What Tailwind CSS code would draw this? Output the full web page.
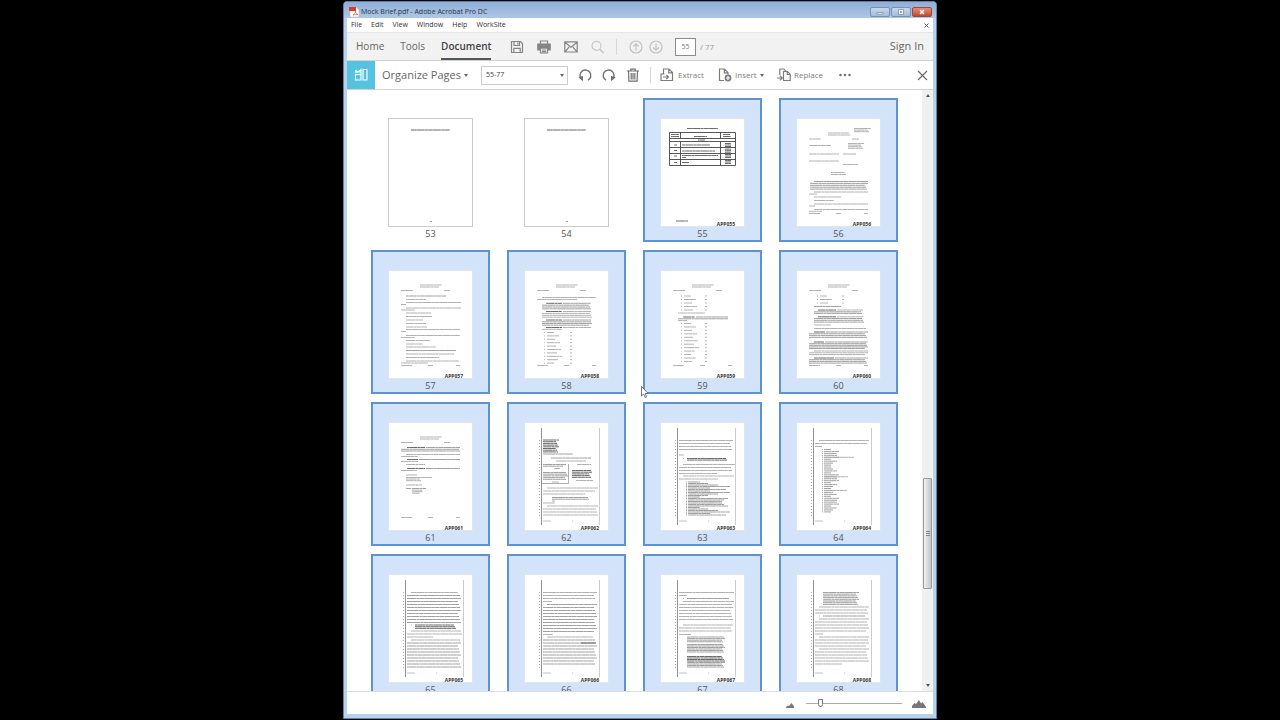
<!doctype html>
<html lang="en">

<head>
  <meta charset="UTF-8">
  <meta name="viewport" content="width=device-width, initial-scale=1.0">
  <title>Mock Brief.pdf - Adobe Acrobat Pro DC</title>
  <script src="https://cdn.jsdelivr.net/npm/@tailwindcss/browser@4"></script>
</head>

<body class="bg-black font-['Open_Sans','Noto_Sans',sans-serif] text-[#666]">
  <div class="relative mx-auto flex h-screen w-full max-w-[594px] flex-col pt-px pb-px">
    <div class="flex min-h-0 flex-1 flex-col rounded-t-sm border border-[#5b83ab] bg-[#b8d2ec] px-[3px] pb-1">

      <!-- title bar -->
      <header class="-mx-[3px] flex h-4 shrink-0 items-center rounded-t-sm bg-linear-to-b from-[#8fafd6] to-[#adc7e6] pr-1 pl-1">
        <svg class="mt-1 size-3" viewBox="0 0 12 12" aria-hidden="true">
          <path d="M2 1h6l3 3v7H2z" fill="#fff" stroke="#c9b5b5" stroke-width=".6" />
          <path d="M1 1h7v4H1z" fill="#d63a2c" />
          <path d="M5 9c1.500-1 2.500-2 2.500-4 0 2 .8 2.500 2.500 3.500-2 0-3.500 0-5 .5z" fill="none" stroke="#d63a2c" stroke-width=".6" />
        </svg>
        <h1 class="mt-1 ml-px flex-1 text-[7px] leading-3 text-[#27364a]">Mock Brief.pdf - Adobe Acrobat Pro DC</h1>
        <div class="mt-1 flex gap-px">
          <button aria-label="Minimize" class="flex h-[10px] w-5 items-center justify-center rounded-[2px] border border-[#7891b3] bg-linear-to-b from-[#c7d8ec] to-[#a3bddb]">
            <svg class="h-2 w-3" viewBox="0 0 12 8"><path d="M3 4.5h6v1.5H3z" fill="#fff" stroke="#6c7f99" stroke-width=".6" /></svg>
          </button>
          <button aria-label="Maximize" class="flex h-[10px] w-5 items-center justify-center rounded-[2px] border border-[#7891b3] bg-linear-to-b from-[#c7d8ec] to-[#a3bddb]">
            <svg class="h-2 w-3" viewBox="0 0 12 8"><path d="M3.5 1.5h5v5h-5z" fill="#fff" stroke="#6c7f99" stroke-width=".7" /><path d="M5 3.3h2v1.4H5z" fill="#6c7f99" /></svg>
          </button>
          <button aria-label="Close" class="flex h-[10px] w-5 items-center justify-center rounded-[2px] border border-[#9b4a3c] bg-linear-to-b from-[#e0907c] to-[#c8452a]">
            <svg class="h-2 w-3" viewBox="0 0 12 8"><path d="M4 2l4 4M8 2L4 6" stroke="#fff" stroke-width="1.4" /></svg>
          </button>
        </div>
      </header>

      <!-- menu bar -->
      <nav class="flex h-[14px] shrink-0 items-center gap-[9px] bg-white px-1 text-[7px] text-[#333]">
        <button>File</button>
        <button>Edit</button>
        <button>View</button>
        <button>Window</button>
        <button>Help</button>
        <button>WorkSite</button>
        <button aria-label="Close document" class="ml-auto">
          <svg class="size-[5px]" viewBox="0 0 5 5"><path d="M.5.5l4 4M4.5.5l-4 4" stroke="#666" stroke-width="1" /></svg>
        </button>
      </nav>

      <!-- main toolbar -->
      <div class="flex h-[29px] shrink-0 items-center border-y border-t-[#e6e6e6] border-b-[#d2d2d2] bg-[#f2f2f2] pr-[9px] pl-[9px] text-[10px]">
        <nav class="flex h-full w-[154px] items-center gap-4">
          <a href="#home">Home</a>
          <a href="#tools">Tools</a>
          <a href="#document" class="flex h-full items-center border-y-2 border-t-transparent border-b-[#555] font-semibold text-[#444]">Document</a>
        </nav>
        <div class="flex items-center gap-[13px] text-[#858585]">
          <button aria-label="Save">
            <svg class="size-[14px]" viewBox="0 0 14 14" fill="none" stroke="currentColor" stroke-width="1.2"><path d="M1.500 1.500h9l2 2v9h-11zM4 1.500v4h5.500v-4M3.800 12.500v-4.200h6.400v4.200M7.800 2.500v2" /></svg>
          </button>
          <button aria-label="Print">
            <svg class="size-[14px]" viewBox="0 0 14 14" fill="none" stroke="currentColor" stroke-width="1.2"><path d="M3.500 4V1h7v3" /><path d="M.8 4h12.400v6H11V8H3v2H.8z" fill="currentColor" /><path d="M3.500 8v5h7V8zM5 10h4M5 11.600h4" /></svg>
          </button>
          <button aria-label="Email">
            <svg class="size-[14px]" viewBox="0 0 14 14" fill="none" stroke="currentColor" stroke-width="1.2"><path d="M.8 1.800h12.400v10.200H.8zM1 2.300l6 5 6-5M1 11.800l4.200-5M13 11.800L8.800 6.800" /></svg>
          </button>
          <button aria-label="Search" class="text-[#c8c8c8]">
            <svg class="size-[14px]" viewBox="0 0 14 14" fill="none" stroke="currentColor" stroke-width="1.200"><circle cx="5.500" cy="5.800" r="4.500" /><path d="M8.800 9.300l3.800 3.800" stroke-width="1.600" /></svg>
          </button>
        </div>
        <span class="ml-[11px] h-4 w-px bg-[#d6d6d6]"></span>
        <div class="ml-3 flex gap-[6px] text-[#c2c2c2]">
          <button aria-label="Previous page">
            <svg class="size-[14px]" viewBox="0 0 14 14" fill="none" stroke="currentColor" stroke-width="1.200"><circle cx="7" cy="7" r="6" /><path d="M7 10.500V4M4.300 6.500L7 3.800l2.700 2.700" /></svg>
          </button>
          <button aria-label="Next page">
            <svg class="size-[14px]" viewBox="0 0 14 14" fill="none" stroke="currentColor" stroke-width="1.200"><circle cx="7" cy="7" r="6" /><path d="M7 3.500V10M4.300 7.500L7 10.200l2.700-2.700" /></svg>
          </button>
        </div>
        <input aria-label="Page number" value="55" class="ml-3 h-[18px] w-[21px] border border-[#8c8c8c] bg-white text-center text-[7px] text-[#777]">
        <span class="ml-1 text-[8px] text-[#999]">/ 77</span>
        <button class="ml-auto text-[11px]">Sign In</button>
      </div>

      <!-- organize pages toolbar -->
      <div class="flex h-[29px] shrink-0 items-center border-b border-[#d2d2d2] bg-white pr-[5px] text-[8px] text-[#7c7c7c]">
        <div class="flex h-full w-7 items-center justify-center bg-[#55c3e0]">
          <svg class="size-[14px]" viewBox="0 0 14 14" fill="none" stroke="#fff" stroke-width="1.100"><path d="M1.500 6.500h5.500v5.500H1.500zM9 1.500h4v10.500H9z" /><path d="M1.500 4.500V2M7 6.500V1.500L4 4h3" /><path d="M1 5l1-3.500 2.500 2.500z" fill="#fff" stroke="none" /></svg>
        </div>
        <button class="ml-[7px] flex w-[99px] items-center gap-[3px] text-[11px] text-[#666]">Organize Pages
          <svg class="h-[3px] w-1" viewBox="0 0 4 3"><path d="M0 0h4L2 3z" fill="#666" /></svg>
        </button>
        <div class="relative">
          <select aria-label="Page range" class="h-[19px] w-[87px] appearance-none border border-[#ccc] bg-white pl-1 text-[7px] text-[#444]">
            <option>55-77</option>
          </select>
          <svg class="pointer-events-none absolute top-2 right-1 h-[3px] w-1" viewBox="0 0 4 3"><path d="M0 0h4L2 3z" fill="#666" /></svg>
        </div>
        <div class="ml-[10px] flex items-center gap-[10px] text-[#707070]">
          <button aria-label="Rotate counterclockwise">
            <svg class="size-[14px]" viewBox="0 0 14 14" fill="none" stroke="currentColor" stroke-width="1.400"><path d="M10 12.200A5.400 5.400 0 1 0 3.600 11.300" /><path d="M.3 9.200l4.700-1.200v5.200z" fill="currentColor" stroke="none" /></svg>
          </button>
          <button aria-label="Rotate clockwise">
            <svg class="size-[14px]" viewBox="0 0 14 14" fill="none" stroke="currentColor" stroke-width="1.400"><path d="M4 12.200A5.400 5.400 0 1 1 10.400 11.300" /><path d="M13.700 9.200L9 8v5.200z" fill="currentColor" stroke="none" /></svg>
          </button>
          <button aria-label="Delete pages">
            <svg class="size-[14px]" viewBox="0 0 14 14" fill="none" stroke="currentColor" stroke-width="1.200"><path d="M1 3h12M4.800 3V1.200h4.400V3M2.500 3l.4 10.200h8.200L11.500 3M5.200 5v6.500M7 5v6.500M8.800 5v6.500" /></svg>
          </button>
        </div>
        <span class="ml-[10px] h-4 w-px bg-[#d6d6d6]"></span>
        <button class="ml-[9px] flex w-[58px] items-center gap-1">
          <svg class="size-[14px] shrink-0" viewBox="0 0 14 14" fill="none" stroke="currentColor" stroke-width="1.200"><path d="M3.500 6V1h5.500l3.500 3.500v8h-8M8.800 1v3.800h3.700" /><path d="M4.500 6H1v6.500h4M3 9h5M6.300 7L8.500 9l-2.200 2" /></svg>
          Extract
        </button>
        <button class="flex w-[59px] items-center gap-[3px]">
          <svg class="size-[14px] shrink-0" viewBox="0 0 14 14" fill="none" stroke="currentColor" stroke-width="1.200"><path d="M6 12.500H1.500V1h5L10 4.500v2.300M6.300 1v3.800H10" /><circle cx="10" cy="10" r="3.400" fill="currentColor" stroke="none" /><path d="M10 8v4M8 10h4" stroke="#fff" /></svg>
          Insert
          <svg class="h-[3px] w-1" viewBox="0 0 4 3"><path d="M0 0h4L2 3z" fill="#666" /></svg>
        </button>
        <button class="flex w-[61px] items-center gap-[3px]">
          <svg class="size-[14px] shrink-0" viewBox="0 0 14 14" fill="none" stroke="currentColor" stroke-width="1.200"><path d="M6.500 12.500V3.500h4l2.700 2.700v6.300zM10.300 3.500v3h2.900M2.800 7V1h4L9 3.200" /><path d="M0 10h5M3 7.800L5.300 10 3 12.200" /></svg>
          Replace
        </button>
        <button aria-label="More">
          <svg class="h-1 w-[14px]" viewBox="0 0 14 4" fill="#757575"><circle cx="2.500" cy="2" r="1.300" /><circle cx="7" cy="2" r="1.300" /><circle cx="11.500" cy="2" r="1.300" /></svg>
        </button>
        <button aria-label="Close toolbar" class="ml-auto">
          <svg class="size-[11px]" viewBox="0 0 11 11"><path d="M1 1l9 9M10 1l-9 9" stroke="#666" stroke-width="1.100" /></svg>
        </button>
      </div>

      <!-- thumbnails -->
      <div class="flex min-h-0 flex-1 bg-white">
        <main id="pages" class="grid min-w-0 flex-1 grid-cols-4 content-start gap-x-[17px] gap-y-2 overflow-hidden px-6 pt-2"></main>
        <div class="flex w-[11px] shrink-0 flex-col items-center bg-[#f0f0f0]" role="scrollbar" aria-controls="pages" aria-label="Pages" aria-valuenow="73">
          <svg class="mt-1 h-[3px] w-1 shrink-0" viewBox="0 0 4 3"><path d="M0 3h4L2 0z" fill="#555" /></svg>
          <span class="grow-[381] basis-0"></span>
          <span class="flex w-[9px] grow-[109] basis-0 flex-col items-center justify-center gap-px rounded-[1px] border border-[#999] bg-linear-to-r from-[#f2f2f2] to-[#c4c4c8]">
            <i class="h-px w-1 bg-[#888]"></i>
            <i class="h-px w-1 bg-[#888]"></i>
            <i class="h-px w-1 bg-[#888]"></i>
          </span>
          <span class="grow-[95] basis-0"></span>
          <svg class="mb-1 h-[3px] w-1 shrink-0" viewBox="0 0 4 3"><path d="M0 0h4L2 3z" fill="#555" /></svg>
        </div>
      </div>

      <!-- zoom bar -->
      <footer class="flex h-[23px] shrink-0 items-center justify-end border-t border-[#ddd] bg-white pr-[7px]">
        <svg class="mt-1 h-[5px] w-2" viewBox="0 0 8 5"><path d="M0 5V4L2 2.500l1 .5L5.500 0 8 3.500V5z" fill="#777" /></svg>
        <input type="range" aria-label="Thumbnail size" min="0" max="100" value="13" class="mr-[10px] ml-3 h-3 w-[96px] appearance-none bg-[linear-gradient(#aaa,#aaa)] bg-[length:100%_1px] bg-center bg-no-repeat [&::-webkit-slider-thumb]:h-2 [&::-webkit-slider-thumb]:w-[5px] [&::-webkit-slider-thumb]:appearance-none [&::-webkit-slider-thumb]:rounded-b-[3px] [&::-webkit-slider-thumb]:border [&::-webkit-slider-thumb]:border-[#777] [&::-webkit-slider-thumb]:bg-white">
        <svg class="mt-px h-2 w-[14px]" viewBox="0 0 14 8"><path d="M0 8V6l2.500-3 1.500 1L7 0l2 3.500 1.500-1.500L14 7v1z" fill="#777" /></svg>
      </footer>
    </div>

    <!-- mouse pointer -->
    <svg class="pointer-events-none absolute top-[386px] left-[298px] h-3 w-2" viewBox="0 0 8 12"><path d="M.5.500v9.500l2.200-2 1.500 3.500 1.500-.7-1.500-3.300h3z" fill="#fff" stroke="#555" stroke-width=".8" /></svg>
  </div>

  <script>
    // every row: x, y, width, line count, line step, tone (0 light, 1 medium, 2 dark)
    var tones = ['#a8a8a8', '#959595', '#5a5a5a'];
    var head = [[31, 14, 22, 2, 2, 0], [12, 19.5, 12], [55, 19.5, 6]];
    var foot = [[12, 94.5, 11], [39, 94.5, 5], [67, 94.5, 4]];

    function list(y, n, step, x, col) {
      var rows = [];
      for (var i = 0; i < n; i++) {
        rows.push([x, y + i * step, 1], [x + 3, y + i * step, 7 + (i * 5) % 9], [col, y + i * step, 2]);
      }
      return rows;
    }

    // numbered list packed tight, as in the pleading pages
    function dense(y, n, step, min, spread, tone) {
      var rows = [];
      for (var i = 0; i < n; i++) {
        rows.push([25, y + i * step, 1, 1, 0, 1], [27, y + i * step, min + (i * 7 + i * i) % spread, 1, 0, tone]);
      }
      return rows;
    }

    var pages = [
      { n: 53, rows: [[22, 11, 39, 1, 0, 2], [41, 102.5, 2, 1, 0, 1]] },
      { n: 54, rows: [[22, 11, 39, 1, 0, 2], [41, 102.5, 2, 1, 0, 1]] },
      { n: 55, table: true, rows: [
        [26, 9.5, 31, 1, 0, 2], [10, 15.5, 8, 2, 2, 2], [33, 17.5, 13, 1, 0, 2], [62, 15.5, 10, 2, 2, 2], [37, 21, 7, 1, 0, 2],
        [13, 26, 3, 1, 0, 2], [13, 31.5, 3, 1, 0, 2], [13, 37, 3, 1, 0, 2], [13, 43.5, 3, 1, 0, 2],
        [21, 26, 28, 1, 0, 2], [21, 32, 33, 1, 0, 2], [21, 36.5, 36, 1, 0, 2], [21, 38.5, 4, 1, 0, 2], [21, 43.5, 7, 1, 0, 2],
        [64, 24.5, 6, 3, 1.5, 2], [64, 30.2, 6, 3, 1.5, 2], [64, 35.5, 6, 3, 1.5, 2], [64, 41.5, 6, 3, 1.5, 2], [15, 102, 12, 1, 0, 2]] },
      { n: 56, rows: [[57, 9.5, 17, 3, 1.6], [31, 14, 22, 2, 2], [12, 20, 12], [55, 20, 7], [51, 24.5, 16, 4, 1.6], [12, 26.5, 22], [12, 35, 30],
        [46, 35, 13], [12, 42, 30], [46, 45.5, 15], [34, 53.5, 16, 2, 2], [17, 62.5, 54, 1, 0, 1], [13, 64.4, 58, 4, 1.9, 1], [17, 73, 54], [12, 75, 8], [17, 78, 27],
        [17, 81.5, 20], [17, 85, 54], [12, 87, 6], [17, 90.5, 54], [12, 92.3, 13]].concat(foot) },
      { n: 57, rows: head.concat([[17, 25, 40, 1, 0, 1], [17, 28.5, 20], [17, 31.5, 55], [12, 33.5, 5], [17, 37, 55], [12, 39, 14], [17, 42, 25], [17, 45.5, 26],
        [17, 49, 17], [17, 52.5, 20], [17, 56, 21], [17, 58.5, 54], [12, 60.5, 5], [17, 64.5, 54], [12, 66.5, 14], [17, 69.5, 24], [17, 73, 17], [17, 76, 30],
        [17, 79.5, 50, 1, 0, 1], [17, 83, 48], [17, 86.5, 33], [17, 90, 53], [12, 92, 27]], foot) },
      { n: 58, rows: head.concat([[17, 26.5, 54], [12, 28.5, 40], [21, 32.3, 16, 1, 0, 2], [38, 32.3, 28, 1, 0, 1], [17, 34.2, 50, 3, 1.8, 1], [21, 40.5, 16, 1, 0, 2],
        [38, 40.5, 28], [17, 42.4, 50, 3, 1.9], [21, 49, 16, 1, 0, 2], [38, 49, 28, 1, 0, 1], [17, 50.8, 50, 3, 1.7, 1], [21, 56.5, 16, 1, 0, 2], [38, 56.5, 28], [17, 58.3, 20]],
        list(61.5, 10, 3.4, 19, 45), foot) },
      { n: 59, rows: head.concat(list(25, 5, 3.5, 20, 44), [[17, 42, 27], [22, 46, 12, 1, 0, 2], [35, 46, 32, 1, 0, 1], [17, 47.8, 50, 1, 0, 1], [17, 49.6, 9]],
        list(52.5, 12, 3.45, 20, 44), foot) },
      { n: 60, rows: head.concat(list(25, 3, 3.5, 20, 45), [[17, 35.5, 27, 1, 0, 1], [21, 39, 18, 1, 0, 2], [40, 39, 26], [17, 40.8, 50, 2, 1.6, 1], [21, 45.8, 18, 1, 0, 2],
        [40, 45.8, 26], [17, 47.5, 50, 3, 1.8, 1], [17, 54, 17], [17, 57.5, 52], [17, 61, 11, 1, 0, 2], [29, 61, 42, 1, 0, 1], [12, 62.8, 59, 3, 1.8, 1], [17, 71, 10, 1, 0, 2],
        [28, 71, 43, 1, 0, 1], [12, 72.7, 59, 4, 1.6, 1], [17, 80, 54], [12, 81.8, 59, 2, 1.8], [17, 87, 20, 1, 0, 2], [38, 87, 33, 1, 0, 1], [12, 88.7, 59, 3, 1.7, 1]], foot) },
      { n: 61, rows: head.concat([[18, 24.5, 18, 1, 0, 2], [37, 24.5, 34, 1, 0, 1], [12, 26.3, 59, 2, 1.7, 1], [17, 31.5, 54], [12, 33.5, 17], [18, 36.5, 11, 1, 0, 2], [30, 36.5, 41, 1, 0, 1],
        [12, 38.5, 17], [17, 41.5, 19], [18, 45.5, 18, 1, 0, 2], [37, 45.5, 34, 1, 0, 1], [12, 47.5, 16], [17, 52, 11], [17, 54.5, 26], [17, 56, 15, 2, 1.7], [17, 62, 16],
        [17, 65.5, 5, 1, 0, 1], [23, 65.5, 14, 1, 0, 1], [23, 67.2, 11, 3, 1.5]], foot) },
      { n: 62, pleading: true, box: true, rows: [[18, 17, 16, 8, 1.7, 2], [18, 31, 30, 1, 0, 1], [26, 35, 40, 1, 0, 1], [31, 38, 30], [18, 41.5, 23, 2, 1.7, 1], [29, 45.5, 6],
        [18, 49.5, 25, 5, 1.7, 1], [27, 59, 7], [52, 41.5, 14], [47, 47.5, 20, 5, 1.7, 2], [51, 57.5, 17], [22, 65, 51], [18, 68, 52], [18, 71, 42], [27, 74.5, 38, 2, 1.7, 1], [27, 78, 3],
        [18, 80, 12], [22, 83, 51], [18, 86, 55, 3, 3]] },
      { n: 63, pleading: true, rows: [[18, 17.5, 54, 4, 3], [18, 32, 5], [22, 35.5, 1], [26, 35.5, 42, 2, 1.6, 2], [22, 41.5, 52], [18, 44.5, 53, 2, 3], [18, 50.5, 38], [22, 53, 51], [18, 56, 39]]
        .concat(dense(59, 23, 1.5, 12, 34, 1)) },
      { n: 64, pleading: true, rows: [[22, 17.5, 50], [18, 20.5, 52], [18, 23.5, 7]].concat(dense(26.5, 33, 1.95, 7, 12, 1), [[27, 34.3, 30], [27, 53.8, 24], [27, 67.5, 23]]) },
      { n: 65, pleading: true, rows: [[22, 17.5, 47], [18, 20.5, 54, 10, 3, 1], [22, 50, 1], [26, 50, 42, 3, 1.7, 2], [22, 56, 50], [18, 59, 55, 1], [18, 62, 26], [22, 65, 49],
        [18, 68, 54, 9, 3, 1]] },
      { n: 66, pleading: true, rows: [[18, 17.5, 54, 3, 3], [18, 26.5, 9], [22, 29.5, 50, 1, 0, 1], [18, 32.5, 54, 9, 3, 1], [18, 59.5, 10], [22, 62, 46], [18, 65, 54, 9, 3, 1], [56, 68, 15, 1, 0, 2]] },
      { n: 67, pleading: true, rows: [[18, 17.5, 55], [18, 20.5, 8], [22, 23.5, 1], [26, 23.5, 42, 1, 0, 1], [22, 26.5, 51], [18, 29.5, 54, 6, 3], [22, 50, 50], [18, 53, 55, 2, 3], [18, 59.5, 12],
        [26, 62, 38, 4, 1.6, 1], [26, 69.5, 38, 6, 1.5, 1], [26, 81.5, 38, 4, 1.5, 2], [26, 87.5, 38, 4, 1.5, 1]] },
      { n: 68, pleading: true, rows: [[26, 17.5, 36, 8, 1.7, 1], [22, 32, 50], [18, 35, 54, 2, 3], [22, 41, 1], [26, 41, 42, 1, 0, 1], [22, 44, 50], [18, 47, 54, 4, 3], [18, 59, 8], [22, 62, 50],
        [18, 65, 54, 3, 3], [22, 74, 50], [18, 77, 54, 4, 3], [18, 89, 27]] }
    ];

    function draw(page) {
      var out = '';
      page.rows.forEach(function (r, k) {
        var count = r[3] || 1;
        for (var i = 0; i < count; i++) {
          var y = r[1] + i * (r[4] || 0);
          // ragged right edge
          var w = count > 1 && r[2] > 8 ? r[2] - (i * 3 + k) % 4 : r[2];
          out += '<path d="M' + r[0] + ' ' + y + 'h' + w + '" stroke="' + tones[r[5] || 0] + '" stroke-dashoffset="' + ((i * 3 + k) % 7) + '"/>';
        }
      });
      var rules = '';
      if (page.pleading) {
        rules += '<path d="M16.500 5v97" stroke="#777" stroke-width=".8"/><path d="M74.500 5v97" stroke="#aaa" stroke-width=".6"/>';
        rules += '<path d="M14.500 17v76" stroke="#aaa" stroke-width="1" stroke-dasharray="1 2"/>';
        rules += '<path d="M18 98h8M47 98h1" stroke="#aaa" stroke-width=".7"/>';
      }
      if (page.box) rules += '<path d="M43.500 41v19.500H17.500" fill="none" stroke="#777" stroke-width=".6"/>';
      if (page.table) rules += '<path d="M8.500 13.500h66v33h-66zM8.500 19.500h66M8.500 22.500h66M8.500 28.500h66M8.500 34.500h66M8.500 40.500h66M19.500 13v6.500M59.500 13v6.500M19.500 22.500V46M59.500 22.500V46" fill="none" stroke="#444" stroke-width=".9"/>';
      return '<svg class="block h-[107px] w-[83px]" viewBox="0 0 83 107" aria-hidden="true"><g stroke-width=".9" stroke-dasharray="5 .2 8 .3 3 .2">' + out + '</g>' + rules + '</svg>';
    }

    var html = '';
    pages.forEach(function (page) {
      var selected = page.n >= 55;
      html += '<button aria-pressed="' + selected + '" class="flex flex-col items-center border-2 pt-[18px] ' + (selected ? 'border-[#5b93d3] bg-[#d3e4fa]' : 'border-transparent') + '">'
        + '<span class="relative block border bg-white ' + (selected ? 'border-[#dfe6ee]' : 'border-[#ccc]') + '">' + draw(page)
        + (selected ? '<span class="absolute right-[9px] bottom-0 text-[5px] leading-[3px] font-bold font-[\'Liberation_Sans\',sans-serif] text-[#333]">APP0' + page.n + '</span>' : '')
        + '</span><span class="text-[9px] leading-[13px] text-[#555]">' + page.n + '</span></button>';
    });
    document.getElementById('pages').innerHTML = html;
  </script>
</body>

</html>
